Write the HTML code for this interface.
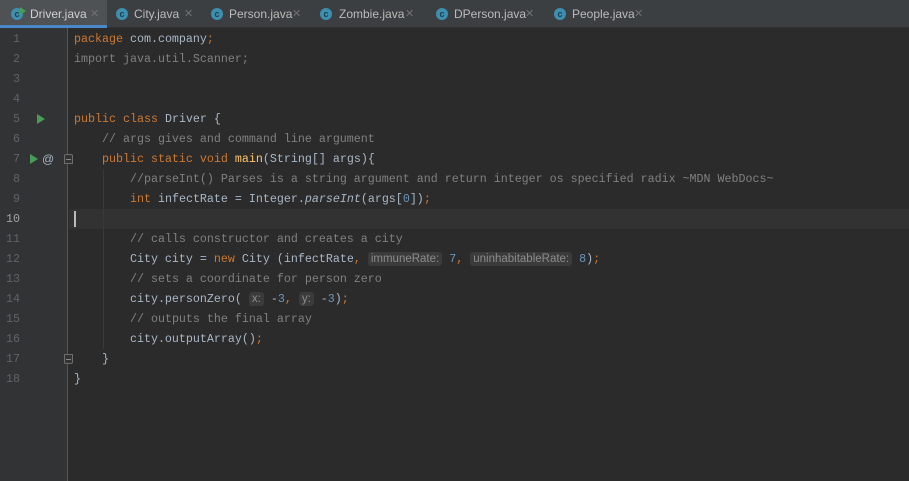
<!DOCTYPE html>
<html><head><meta charset="utf-8"><style>
*{margin:0;padding:0;box-sizing:border-box}
body{width:909px;height:481px;background:#2b2b2b;overflow:hidden;position:relative;font-family:"Liberation Sans",sans-serif}
#tabs{position:absolute;left:0;top:0;width:909px;height:28px;background:#3c3f41;border-bottom:1px solid #323232}
.tab{position:absolute;top:0;height:28px;font-size:12px;color:#bbbbbb;line-height:28px}
.tab .ic{position:absolute;top:8px;width:12px;height:12px;border-radius:50%;background:#3d8fb0;color:#1d3e4e;font-size:9px;font-weight:bold;line-height:12px;text-align:center}
.tab .x{position:absolute;top:0;color:#6e7173;font-size:11px}
#sel{position:absolute;left:0;top:0;width:107px;height:28px;background:#4e5254}
#selbar{position:absolute;left:0;top:25px;width:107px;height:3px;background:#4a88c7}
#gutter{position:absolute;left:0;top:28px;width:68px;height:453px;background:#313335;border-right:1px solid #555555}
.ln{position:absolute;left:0;width:20px;text-align:right;font-family:"Liberation Mono",monospace;font-size:11.67px;color:#606366;height:20px;line-height:20px}
.code{position:absolute;left:74px;font-family:"Liberation Mono",monospace;font-size:11.67px;color:#a9b7c6;white-space:pre;height:20px;line-height:20px}
.k{color:#cc7832}.c{color:#808080}.m{color:#ffc66d}.n{color:#6897bb}.i{font-style:italic}
.h{background:#3b3b3b;color:#8c8c8c;font-family:"Liberation Sans",sans-serif;font-size:11.5px;border-radius:3px;padding:1px 3px}
.guide{position:absolute;width:1px;background:#393939}
.run{position:absolute;width:0;height:0;border-top:5px solid transparent;border-bottom:5px solid transparent;border-left:8px solid #499c54}
</style></head><body>
<div id="tabs">
<div id="sel"></div><div id="selbar"></div>
<div class="tab" style="left:11px;width:100px"><span class="ic" style="left:0">c</span><span style="position:absolute;left:19px;color:#d0d0d0">Driver.java</span><span class="x" style="left:79px">✕</span></div>
<div class="tab" style="left:116px;width:100px"><span class="ic" style="left:0">c</span><span style="position:absolute;left:18px">City.java</span><span class="x" style="left:68px">✕</span></div>
<div class="tab" style="left:211px;width:110px"><span class="ic" style="left:0">c</span><span style="position:absolute;left:18px">Person.java</span><span class="x" style="left:81px">✕</span></div>
<div class="tab" style="left:320px;width:110px"><span class="ic" style="left:0">c</span><span style="position:absolute;left:19px">Zombie.java</span><span class="x" style="left:85px">✕</span></div>
<div class="tab" style="left:436px;width:110px"><span class="ic" style="left:0">c</span><span style="position:absolute;left:18px">DPerson.java</span><span class="x" style="left:89px">✕</span></div>
<div class="tab" style="left:554px;width:110px"><span class="ic" style="left:0">c</span><span style="position:absolute;left:18px">People.java</span><span class="x" style="left:80px">✕</span></div>
<div style="position:absolute;left:20px;top:7px;width:0;height:0;border-top:4px solid transparent;border-bottom:4px solid transparent;border-left:6px solid #499c54"></div>
</div>
<div id="gutter"></div>
<div style="position:absolute;left:69px;top:209px;width:840px;height:20px;background:#323232"></div>
<div class="guide" style="left:103px;top:169px;height:180px"></div>
<div style="position:absolute;left:74px;top:211px;width:2px;height:16px;background:#bbbbbb"></div>
<div class="run" style="left:37px;top:114px"></div>
<div class="run" style="left:30px;top:154px"></div>
<div style="position:absolute;left:42px;top:149px;font-size:12px;color:#a9b7c6;line-height:20px">@</div>
<div style="position:absolute;left:64px;top:154px;width:9px;height:10px;border:1px solid #6e6e6e;background:#313335;border-radius:2px 2px 0 0"><div style="position:absolute;left:1px;top:4px;width:5px;height:1px;background:#8a8a8a"></div></div>
<div style="position:absolute;left:64px;top:354px;width:9px;height:10px;border:1px solid #6e6e6e;background:#313335;border-radius:0 0 2px 2px"><div style="position:absolute;left:1px;top:4px;width:5px;height:1px;background:#8a8a8a"></div></div>

<div class="ln" style="top:29px">1</div>
<div class="ln" style="top:49px">2</div>
<div class="ln" style="top:69px">3</div>
<div class="ln" style="top:89px">4</div>
<div class="ln" style="top:109px">5</div>
<div class="ln" style="top:129px">6</div>
<div class="ln" style="top:149px">7</div>
<div class="ln" style="top:169px">8</div>
<div class="ln" style="top:189px">9</div>
<div class="ln" style="top:209px;color:#a4a3a3">10</div>
<div class="ln" style="top:229px">11</div>
<div class="ln" style="top:249px">12</div>
<div class="ln" style="top:269px">13</div>
<div class="ln" style="top:289px">14</div>
<div class="ln" style="top:309px">15</div>
<div class="ln" style="top:329px">16</div>
<div class="ln" style="top:349px">17</div>
<div class="ln" style="top:369px">18</div>

<div class="code" style="top:29px"><span class="k">package</span> com.company<span class="k">;</span></div>
<div class="code c" style="top:49px">import java.util.Scanner;</div>
<div class="code" style="top:109px"><span class="k">public class</span> Driver {</div>
<div class="code" style="top:129px">    <span class="c">// args gives and command line argument</span></div>
<div class="code" style="top:149px">    <span class="k">public static void</span> <span class="m">main</span>(String[] args){</div>
<div class="code" style="top:169px">        <span class="c">//parseInt() Parses is a string argument and return integer os specified radix ~MDN WebDocs~</span></div>
<div class="code" style="top:189px">        <span class="k">int</span> infectRate = Integer.<span class="i">parseInt</span>(args[<span class="n">0</span>])<span class="k">;</span></div>
<div class="code" style="top:229px">        <span class="c">// calls constructor and creates a city</span></div>
<div class="code" style="top:249px">        City city = <span class="k">new</span> City (infectRate<span class="k">,</span> <span class="h">immuneRate:</span> <span class="n">7</span><span class="k">,</span> <span class="h">uninhabitableRate:</span> <span class="n">8</span>)<span class="k">;</span></div>
<div class="code" style="top:269px">        <span class="c">// sets a coordinate for person zero</span></div>
<div class="code" style="top:289px">        city.personZero( <span class="h">x:</span> -<span class="n">3</span><span class="k">,</span> <span class="h">y:</span> -<span class="n">3</span>)<span class="k">;</span></div>
<div class="code" style="top:309px">        <span class="c">// outputs the final array</span></div>
<div class="code" style="top:329px">        city.outputArray()<span class="k">;</span></div>
<div class="code" style="top:349px">    }</div>
<div class="code" style="top:369px">}</div>
</body></html>
